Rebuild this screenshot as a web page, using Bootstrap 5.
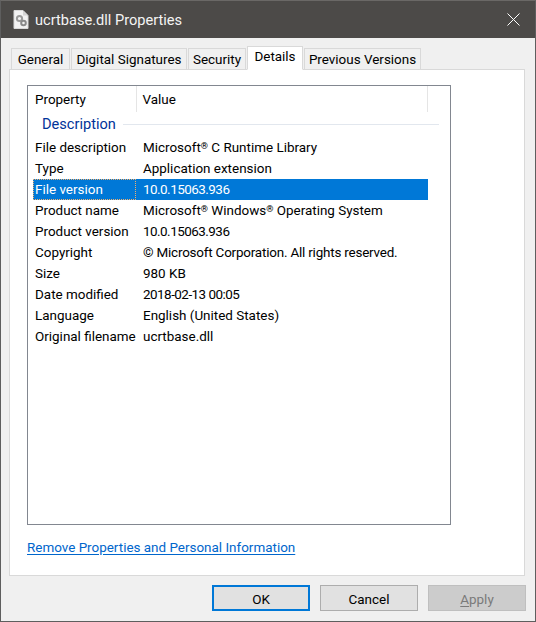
<!DOCTYPE html>
<html lang="en">
<head>
<meta charset="utf-8">
<title>ucrtbase.dll Properties</title>
<link href="https://cdn.jsdelivr.net/npm/bootstrap@5.3.0/dist/css/bootstrap.min.css" rel="stylesheet">
<style>
html,body{height:100%;margin:0;overflow:hidden}
body{font-family:Roboto,"Noto Sans",sans-serif;font-size:13.45px;color:#000;background:#f0f0f0}
.win{height:622px;width:536px;border:1px solid #5e5e5e;border-top-color:#6a6866;background:#f0f0f0}
.titlebar{height:37px;background:#4c4a48;color:#fff;font-size:14.6px;padding-left:12px;flex:none}
.titlebar svg{flex:none}
.ttl{margin-left:6px;padding-top:2px;line-height:1;color:#f4f4f4}
.closex{margin-left:auto;margin-right:15px}
.tabwrap{padding:8px 10px 0 8px;flex:1 1 auto;min-height:0}
.tabs{padding-left:2px;border-bottom:0;gap:1px;height:24px;align-items:flex-end;position:relative;z-index:1;margin-bottom:-1px}
.tabs .nav-link{height:22px;padding:0;text-align:center;line-height:21px;font-size:13.45px;color:#000;background:#f0f0f0;border:1px solid #d9d9d9;border-bottom-color:#d9d9d9;border-radius:0;margin:0}
.tabs .nav-link.active{height:24px;background:#fff;border-color:#d9d9d9 #d9d9d9 #fff;color:#000;line-height:20px}
.tabs li:nth-child(1) .nav-link{width:59px}
.tabs li:nth-child(2) .nav-link{width:116px}
.tabs li:nth-child(3) .nav-link{width:58px}
.tabs li:nth-child(4) .nav-link{width:56px}
.tabs li:nth-child(5) .nav-link{width:117px}
.pane{height:507px;background:#fff;border:1px solid #d9d9d9;padding:15px 73px 0 17px}
.proplist{height:440px;width:424px;border:1px solid #828790;padding:0 22px 0 5px;flex:none}
.proptable{width:395px;table-layout:fixed;border-collapse:collapse;color:#000}
.proptable td,.proptable th{padding:0 2px;font-weight:400;height:21px;line-height:20px;white-space:nowrap;border:0}
.proptable .c1{width:103px}
.headrow th{height:26px;padding:1px 2px 0}
.headrow th+th{border-left:1px solid #e5e5e5;padding-left:6px}
.headrow th{border-right:1px solid #e5e5e5}
.proptable td+td{padding-left:7px}
.grouprow td{height:25px;padding:0 0 1px}
.groupline{gap:7px;padding-left:9px;margin-right:-11px;color:#003399;font-size:14.6px;line-height:20px}
.groupline i{flex:1;height:1px;background:#e2e7ee;display:block}
.sel td{background:#0078d7;color:#fff}
.sel td:first-child{outline:1px dotted #f0b070;outline-offset:-1px}
.numval{letter-spacing:-.52px}
.tightval{letter-spacing:-.2px}
.regmark{font-size:.68em;vertical-align:.28em;line-height:0}
.removelink{margin-top:13px;display:inline-block;color:#0066cc;text-decoration:underline;text-underline-offset:2px;font-size:13.45px}
.footerbar{height:46px;padding:10px 9px 0 0;gap:10px;flex:none}
.winbtn{width:98px;height:26px;padding:3px 0 0;border-radius:0;font-size:13.45px;line-height:20px;color:#000;background:#e1e1e1;border:1px solid #adadad}
.winbtn.isdefault{border:2px solid #0078d7}
.winbtn.isoff,.winbtn.isoff:disabled{background:#ccc;border-color:#bfbfbf;color:#7a7a7a;opacity:1}
.winbtn u{text-underline-offset:2px}
</style>
</head>
<body>
<div class="win d-flex flex-column">
  <div class="titlebar d-flex align-items-center">
    <svg width="16" height="19" viewBox="0 0 16 19"><path d="M1 0.5h9l5 5v13H1z" fill="#f2f2f2" stroke="#d8d8d8"/><path d="M10 .5v5h5" fill="#d4d4d4"/><circle cx="6.5" cy="8.5" r="2.6" fill="none" stroke="#9a9a9a" stroke-width="2"/><circle cx="10.5" cy="13" r="2.3" fill="none" stroke="#8a8a8a" stroke-width="2"/></svg>
    <span class="ttl">ucrtbase.dll Properties</span>
    <svg class="closex" width="13" height="13" viewBox="0 0 13 13"><path d="M.5.5l12 12M12.5.5l-12 12" stroke="#fff" fill="none"/></svg>
  </div>
  <div class="tabwrap">
    <ul class="nav nav-tabs tabs">
      <li class="nav-item"><a class="nav-link" href="#">General</a></li>
      <li class="nav-item"><a class="nav-link" href="#">Digital Signatures</a></li>
      <li class="nav-item"><a class="nav-link" href="#">Security</a></li>
      <li class="nav-item"><a class="nav-link active" href="#">Details</a></li>
      <li class="nav-item"><a class="nav-link" href="#">Previous Versions</a></li>
    </ul>
    <div class="pane">
      <div class="proplist">
        <table class="proptable">
          <colgroup><col class="c1"><col></colgroup>
          <tr class="headrow"><th>Property</th><th>Value</th></tr>
          <tr class="grouprow"><td colspan="2"><div class="groupline d-flex align-items-center"><span>Description</span><i></i></div></td></tr>
          <tr><td>File description</td><td>Microsoft<span class="regmark">®</span> C Runtime Library</td></tr>
          <tr><td>Type</td><td>Application extension</td></tr>
          <tr class="sel"><td>File version</td><td class="numval">10.0.15063.936</td></tr>
          <tr><td>Product name</td><td>Microsoft<span class="regmark">®</span> Windows<span class="regmark">®</span> Operating System</td></tr>
          <tr><td>Product version</td><td class="numval">10.0.15063.936</td></tr>
          <tr><td>Copyright</td><td class="tightval">© Microsoft Corporation. All rights reserved.</td></tr>
          <tr><td>Size</td><td>980 KB</td></tr>
          <tr><td>Date modified</td><td class="numval">2018-02-13 00:05</td></tr>
          <tr><td>Language</td><td>English (United States)</td></tr>
          <tr><td>Original filename</td><td>ucrtbase.dll</td></tr>
        </table>
      </div>
      <a class="removelink" href="#">Remove Properties and Personal Information</a>
    </div>
  </div>
  <div class="footerbar d-flex justify-content-end">
    <button type="button" class="btn winbtn isdefault">OK</button>
    <button type="button" class="btn winbtn">Cancel</button>
    <button type="button" class="btn winbtn isoff" disabled><u>A</u>pply</button>
  </div>
</div>
<script src="https://cdn.jsdelivr.net/npm/bootstrap@5.3.0/dist/js/bootstrap.bundle.min.js"></script>
</body>
</html>
